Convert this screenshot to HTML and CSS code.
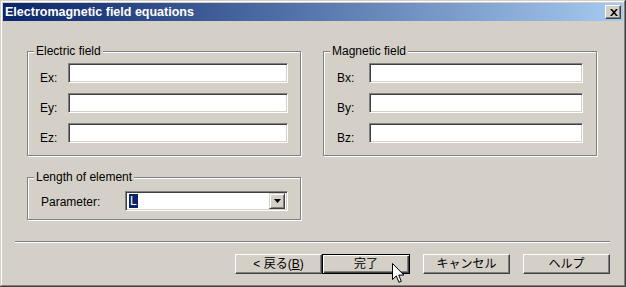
FILE: index.html
```html
<!DOCTYPE html>
<html lang="en">
<head>
<meta charset="utf-8">
<title>Electromagnetic field equations</title>
<link rel="stylesheet" href="styles.css">
</head>
<body>
<div class="window">
  <div class="titlebar">
    <span class="title">Electromagnetic field equations</span>
    <div class="close">
      <svg width="8" height="7" viewBox="0 0 8 7"><path d="M0 0h2l2 2.2 2-2.2h2l-3 3.5 3 3.5h-2l-2-2.2-2 2.2h-2l3-3.5z" fill="#000"/></svg>
    </div>
  </div>
  <div class="page">
    <div class="top-row">
      <div class="group electric">
        <span class="legend">Electric field</span>
        <div class="field"><span class="label">Ex:</span><div class="input"></div></div>
        <div class="field"><span class="label">Ey:</span><div class="input"></div></div>
        <div class="field"><span class="label">Ez:</span><div class="input"></div></div>
      </div>
      <div class="group magnetic">
        <span class="legend">Magnetic field</span>
        <div class="field"><span class="label">Bx:</span><div class="input"></div></div>
        <div class="field"><span class="label">By:</span><div class="input"></div></div>
        <div class="field"><span class="label">Bz:</span><div class="input"></div></div>
      </div>
    </div>
    <div class="group length">
      <span class="legend">Length of element</span>
      <div class="field"><span class="label">Parameter:</span>
        <div class="combo">
          <span class="sel">L</span>
          <div class="drop"><svg width="7" height="4" viewBox="0 0 7 4"><path d="M0 0h7l-3.5 4z" fill="#000"/></svg></div>
        </div>
      </div>
    </div>
  </div>
  <div class="footer">
    <div class="sep"></div>
    <div class="buttons">
      <div class="btn-pair">
        <div class="btn">&lt; 戻る(<u>B</u>)</div>
        <div class="btn default">完了</div>
      </div>
      <div class="btn">キャンセル</div>
      <div class="btn">ヘルプ</div>
    </div>
  </div>
  <svg class="cursor" width="12" height="21" viewBox="0 0 12 21"><path d="M0.5 0.5v16l3.8-3.6 2.6 6.4 2.4-1-2.6-6.2h5.2z" fill="#fff" stroke="#000" stroke-width="1"/></svg>
</div>
</body>
</html>
```

FILE: styles.css
```css
html, body {
  margin: 0;
  padding: 0;
  background: #d4d0c8;
}
body {
  font-family: "Liberation Sans", Arial, "Noto Sans CJK JP", sans-serif;
  font-size: 12px;
  color: #000;
}
.window {
  position: relative;
  width: 626px;
  height: 287px;
  box-sizing: border-box;
  padding: 3px;
  background: #d4d0c8;
  box-shadow: inset -1px -1px 0 #404040, inset 1px 1px 0 #d4d0c8, inset -2px -2px 0 #808080, inset 2px 2px 0 #fff;
  display: flex;
  flex-direction: column;
}
.titlebar {
  height: 18px;
  display: flex;
  align-items: center;
  justify-content: space-between;
  padding: 0 2px;
  background: linear-gradient(to right, #0a246a, #a6caf0);
}
.title {
  color: #fff;
  font-weight: bold;
  font-size: 12.5px;
  line-height: 18px;
  white-space: nowrap;
}
.close {
  width: 16px;
  height: 14px;
  box-sizing: border-box;
  background: #d4d0c8;
  border: 1px solid;
  border-color: #fff #404040 #404040 #fff;
  box-shadow: inset -1px -1px 0 #808080;
  display: flex;
  align-items: center;
  justify-content: center;
}
.close svg { display: block; margin: 0 0 0 1px; }
.page {
  padding: 30px 0 0 24px;
}
.top-row {
  display: flex;
  gap: 22px;
}
.group {
  position: relative;
  box-sizing: border-box;
  width: 274px;
  border: 1px solid #808080;
  box-shadow: inset 1px 1px 0 #fff, 1px 1px 0 #fff;
  display: flex;
  flex-direction: column;
  gap: 10px;
}
.electric, .magnetic {
  height: 105px;
  padding: 11px 0 0 12px;
}
.magnetic { padding-left: 13px; }
.legend {
  position: absolute;
  top: -8px;
  left: 6px;
  padding: 0 2px;
  background: #d4d0c8;
  line-height: 14px;
  white-space: nowrap;
}
.field {
  display: flex;
  align-items: flex-end;
}
.label {
  line-height: 14px;
  margin-bottom: -2px;
  white-space: nowrap;
}
.electric .label { width: 28px; }
.magnetic .label { width: 32px; }
.input {
  box-sizing: border-box;
  height: 20px;
  background: #fff;
  border: 1px solid;
  border-color: #808080 #fff #fff #808080;
  box-shadow: inset 1px 1px 0 #404040, inset -1px -1px 0 #d4d0c8;
}
.electric .input { width: 220px; }
.magnetic .input { width: 214px; }
.length {
  margin-top: 21px;
  height: 43px;
  padding: 13px 0 0 13px;
}
.length .label { width: 84px; margin-bottom: 2px; }
.combo {
  box-sizing: border-box;
  width: 163px;
  height: 20px;
  background: #fff;
  border: 1px solid;
  border-color: #808080 #fff #fff #808080;
  box-shadow: inset 1px 1px 0 #404040, inset -1px -1px 0 #d4d0c8;
  display: flex;
  align-items: center;
  padding: 1px 2px 1px 2px;
}
.sel {
  background: #0a246a;
  color: #fff;
  line-height: 14px;
  padding: 0 1px;
  margin-left: 1px;
}
.drop {
  margin-left: auto;
  width: 16px;
  height: 16px;
  box-sizing: border-box;
  background: #d4d0c8;
  border: 1px solid;
  border-color: #d4d0c8 #404040 #404040 #d4d0c8;
  box-shadow: inset 1px 1px 0 #fff, inset -1px -1px 0 #808080;
  display: flex;
  align-items: center;
  justify-content: center;
}
.drop svg { display: block; }
.footer {
  padding: 0 13px 0 12px;
}
.sep {
  margin-top: 21px;
  height: 0;
  border-top: 1px solid #808080;
  border-bottom: 1px solid #fff;
}
.buttons {
  margin-top: 11px;
  display: flex;
  justify-content: flex-end;
  gap: 13px;
}
.btn-pair {
  display: flex;
}
.btn {
  box-sizing: border-box;
  width: 87px;
  height: 20px;
  border: 1px solid;
  border-color: #fff #404040 #404040 #fff;
  box-shadow: inset -1px -1px 0 #808080;
  display: flex;
  align-items: center;
  justify-content: center;
  font-family: "Liberation Sans", "Noto Sans CJK JP", sans-serif;
  font-size: 12px;
  line-height: 14px;
  white-space: nowrap;
}
.btn.default {
  width: 88px;
  border: 1px solid #000;
  box-shadow: inset 1px 1px 0 #fff, inset -1px -1px 0 #404040, inset -2px -2px 0 #808080;
}
.cursor {
  position: absolute;
  left: 392px;
  top: 263px;
}
```
